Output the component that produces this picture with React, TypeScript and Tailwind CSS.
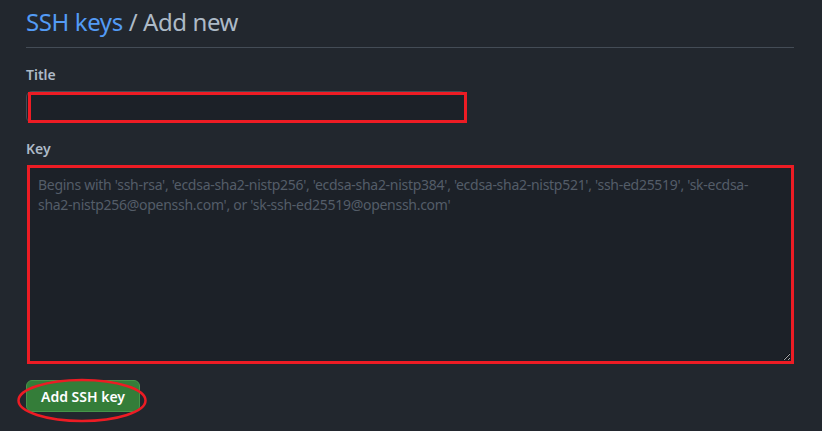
import React from 'react';

const placeholder =
  "Begins with 'ssh-rsa', 'ecdsa-sha2-nistp256', 'ecdsa-sha2-nistp384', 'ecdsa-sha2-nistp521', 'ssh-ed25519', 'sk-ecdsa-sha2-nistp256@openssh.com', or 'sk-ssh-ed25519@openssh.com'";

export default function App() {
  return (
    <div
      className="min-h-[431px] w-full bg-[#22272e] pl-[26px] pr-[28px]"
      style={{ fontFamily: '"Noto Sans", "Liberation Sans", sans-serif' }}
    >
      <div className="border-b border-[#444c56] pt-[6px] pb-[9px]">
        <h2 className="text-[24px] leading-[32px] font-normal tracking-[-0.4px] text-[#adbac7]">
          <a href="#" className="text-[#539bf5]">SSH keys</a> / Add new
        </h2>
      </div>

      <form className="pt-[17px]" onSubmit={(e) => e.preventDefault()}>
        <label className="block text-[14px] leading-[20px] font-semibold text-[#adbac7]">Title</label>
        <div className="relative mt-[6px] w-[441px]">
          <input
            type="text"
            className="block h-[32px] w-[440px] rounded-[6px] border border-[#444c56] bg-[#1c2128] px-3 text-[14px] text-[#adbac7] outline-none"
          />
          {/* red annotation box */}
          <div className="pointer-events-none absolute left-[2px] top-[1px] h-[31px] w-[439px] border-[3px] border-[#ed1c24]" />
        </div>

        <label className="mt-[16px] block text-[14px] leading-[20px] font-semibold text-[#adbac7]">Key</label>
        <textarea
          placeholder={placeholder}
          className="mt-[6px] ml-px block h-[199px] w-[767px] resize-y border-[3px] border-[#ed1c24] bg-[#1c2128] pl-[8px] pr-[40px] pt-[7px] text-[14px] leading-[20px] tracking-[-0.28px] text-[#adbac7] outline-none placeholder:text-[#545d68]"
        />

        <div className="relative mt-[16px] w-[114px]">
          <button
            type="submit"
            className="h-[32px] w-[114px] rounded-[6px] border border-[#46954a] bg-[#347d39] text-[14px] font-semibold text-white"
          >
            Add SSH key
          </button>
          <svg
            className="pointer-events-none absolute left-[-9px] top-[-2px]"
            width="130"
            height="45"
            viewBox="0 0 130 45"
          >
            <ellipse cx="65" cy="22.5" rx="63.5" ry="20.5" fill="none" stroke="#ed1c24" strokeWidth="2.5" />
          </svg>
        </div>
      </form>
    </div>
  );
}
